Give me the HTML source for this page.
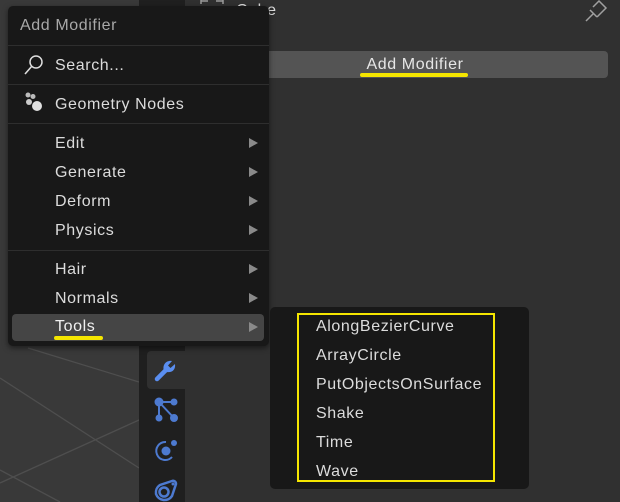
<!DOCTYPE html>
<html><head><style>
*{margin:0;padding:0;box-sizing:border-box}
body{width:620px;height:502px;overflow:hidden;background:#393939;font-family:"Liberation Sans","DejaVu Sans",sans-serif;position:relative;letter-spacing:0.6px}
.abs{position:absolute}
.strip{left:139px;top:0;width:46px;height:502px;background:#1f1f1f}
.panel{left:185px;top:0;width:435px;height:502px;background:#303030}
.btn{left:222px;top:51px;width:386px;height:27px;background:#545454;border-radius:4px;color:#e6e6e6;font-size:16px;text-align:center;line-height:28px}
.menu{left:8px;top:6px;width:261px;height:340px;background:#181818;border-radius:5px;box-shadow:0 2px 6px rgba(0,0,0,.5)}
.it{position:absolute;left:47px;font-size:16px;color:#dcdcdc;line-height:20px}
.ar{position:absolute;left:241px;width:0;height:0;border-left:9px solid #8a8a8a;border-top:5px solid transparent;border-bottom:5px solid transparent}
.sep{position:absolute;left:0;width:261px;height:1px;background:#2e2e2e}
.sub{left:270px;top:307px;width:259px;height:182px;background:#181818;border-radius:5px}
.sit{position:absolute;left:46px;font-size:16px;color:#dcdcdc;line-height:20px}
</style></head><body>
<svg class="abs" style="left:0;top:0" width="139" height="502">
<g stroke="#4e4e4e" stroke-width="1.3" fill="none">
<line x1="0" y1="378" x2="139" y2="468"/>
<line x1="0" y1="483" x2="139" y2="420"/>
<line x1="28" y1="348" x2="139" y2="382"/>
<line x1="0" y1="470" x2="60" y2="502"/>
</g></svg>
<div class="abs strip"></div>
<div class="abs panel"></div>
<div class="abs" style="left:147px;top:351px;width:38px;height:38px;background:#303030;border-radius:4px 0 0 4px"></div>
<svg class="abs" style="left:200px;top:0" width="24" height="14"><path d="M1 0V4M1 1H8M23 0V4M16 1H23" stroke="#9a9a9a" stroke-width="1.5" fill="none"/></svg>
<div class="abs" style="left:236px;top:2px;font-size:16px;color:#ddd">Cube</div>
<svg class="abs" style="left:584px;top:0" width="24" height="24"><path d="M2 21L9 14M6 10L13 17M9 7L15 1L22 8L16 14L13 17M8 8" stroke="#a0a0a0" stroke-width="1.5" fill="none"/></svg>
<div class="abs btn">Add Modifier</div>
<div class="abs" style="left:360px;top:73px;width:108px;height:4px;background:#f5e600;border-radius:2px"></div>
<div class="abs menu">
<div class="it" style="left:12px;top:10px;color:#a8a8a8">Add Modifier</div>
<div class="sep" style="top:39px"></div>
<svg style="position:absolute;left:15px;top:48px" width="22" height="22"><circle cx="13" cy="8" r="6" stroke="#ddd" stroke-width="1.5" fill="none"/><line x1="9" y1="12" x2="2" y2="20" stroke="#ddd" stroke-width="1.6"/></svg>
<div class="it" style="top:50px">Search...</div>
<div class="sep" style="top:78px"></div>
<svg style="position:absolute;left:15px;top:86px" width="24" height="24"><circle cx="5" cy="3" r="2.5" fill="#bbb"/><circle cx="10" cy="4.5" r="2.5" fill="#bbb"/><circle cx="6" cy="10" r="3" fill="#ccc"/><circle cx="14" cy="14" r="5" fill="#e0e0e0"/></svg>
<div class="it" style="top:89px">Geometry Nodes</div>
<div class="sep" style="top:117px"></div>
<div class="it" style="top:128px">Edit</div><div class="ar" style="top:132px"></div>
<div class="it" style="top:157px">Generate</div><div class="ar" style="top:161px"></div>
<div class="it" style="top:186px">Deform</div><div class="ar" style="top:190px"></div>
<div class="it" style="top:215px">Physics</div><div class="ar" style="top:219px"></div>
<div class="sep" style="top:244px"></div>
<div class="it" style="top:254px">Hair</div><div class="ar" style="top:258px"></div>
<div class="it" style="top:283px">Normals</div><div class="ar" style="top:287px"></div>
<div style="position:absolute;left:4px;top:308px;width:252px;height:27px;background:#454545;border-radius:4px"></div>
<div class="it" style="top:311px;color:#f0f0f0">Tools</div><div class="ar" style="top:316px"></div>
<div style="position:absolute;left:46px;top:330px;width:49px;height:4px;background:#f5e600;border-radius:2px"></div>
</div>
<div class="abs sub">
<div class="sit" style="top:10px">AlongBezierCurve</div>
<div class="sit" style="top:39px">ArrayCircle</div>
<div class="sit" style="top:68px">PutObjectsOnSurface</div>
<div class="sit" style="top:97px">Shake</div>
<div class="sit" style="top:126px">Time</div>
<div class="sit" style="top:155px">Wave</div>
</div>
<div class="abs" style="left:297px;top:313px;width:198px;height:169px;border:2px solid #f5e600"></div>
<svg class="abs" style="left:150px;top:356px" width="30" height="30"><path d="M7 23L16 14" stroke="#5a8ef0" stroke-width="4.5" stroke-linecap="round"/><path d="M14 15C12 9 16 4 22 5L18 9.5L20.5 12L25 8C26 15 20 18 14 15Z" fill="#5a8ef0"/></svg>
<svg class="abs" style="left:152px;top:396px" width="28" height="28"><g stroke="#4d7ad0" stroke-width="2" fill="#4d7ad0"><circle cx="7" cy="6" r="3.5"/><circle cx="22" cy="6" r="2.5"/><circle cx="7" cy="22" r="2.5"/><circle cx="22" cy="22" r="3"/><line x1="7" y1="6" x2="22" y2="6"/><line x1="7" y1="6" x2="7" y2="22"/><line x1="7" y1="6" x2="22" y2="22"/></g></svg>
<svg class="abs" style="left:152px;top:437px" width="28" height="28"><path d="M20 20A9 9 0 1 1 14 5" stroke="#4d7ad0" stroke-width="2" fill="none"/><circle cx="14" cy="14" r="4.5" fill="#4d7ad0"/><circle cx="22" cy="6" r="3" fill="#4d7ad0"/></svg>
<svg class="abs" style="left:152px;top:476px" width="28" height="26"><path d="M4 18A9 9 0 0 0 20 20L24 8A3 3 0 0 0 20 5L8 9A9 9 0 0 0 4 18Z" stroke="#4d7ad0" stroke-width="2.5" fill="none"/><circle cx="12" cy="16" r="4.5" stroke="#4d7ad0" stroke-width="2.5" fill="none"/><circle cx="21" cy="8" r="1.5" fill="#4d7ad0"/></svg>
</body></html>
